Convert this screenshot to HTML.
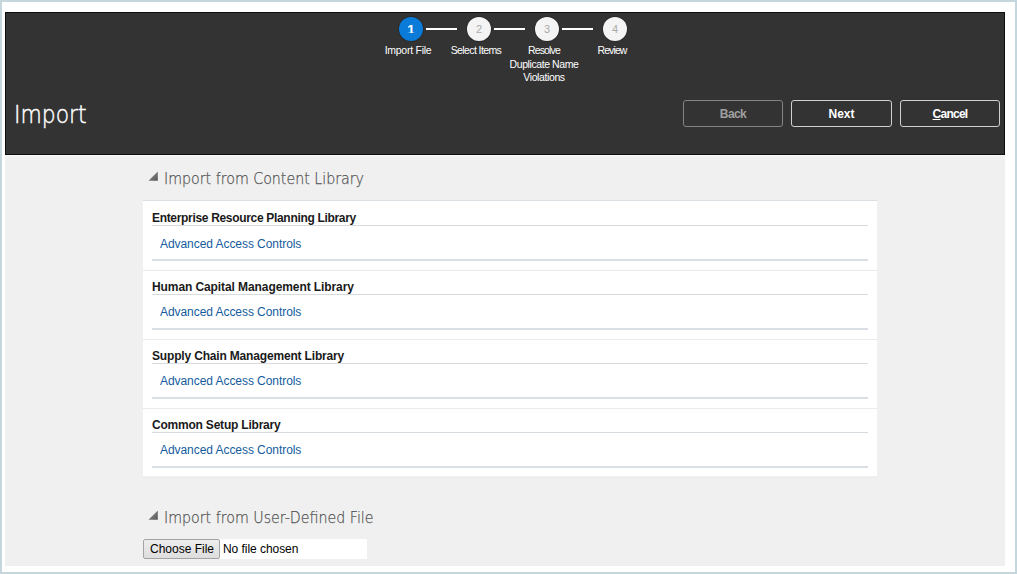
<!DOCTYPE html>
<html lang="en">
<head>
<meta charset="utf-8">
<title>Import</title>
<style>
html,body{margin:0;padding:0;}
body{width:1017px;height:574px;overflow:hidden;background:#fff;position:relative;font-family:"Liberation Sans",sans-serif;}
.frame{position:absolute;left:0;top:0;width:1013px;height:570px;border:2px solid #c6d6dd;}
.hdr{position:absolute;left:5px;top:12px;width:1000px;height:143px;background:#333333;box-sizing:border-box;border:1px solid #0e0e0e;}
.main{position:absolute;left:5px;top:155px;width:1000px;height:411px;background:linear-gradient(#fbfbfb,#f0f0f0 2px,#f0f0f0);}
.abs{position:absolute;white-space:nowrap;}
.circle{position:absolute;width:24px;height:24px;border-radius:50%;background:#f4f4f4;color:#aaa;font-size:11px;line-height:24px;text-align:center;top:17px;box-shadow:0 0 0 1px #2b2b2b;}
.circle.on{background:#0b7bda;color:#fff;}
.one{position:absolute;left:0;top:1px;width:24px;font-weight:bold;font-size:13.5px;line-height:24px;text-align:center;clip-path:inset(0 0 9px 0);}
.conn{position:absolute;height:2px;background:#fff;top:28px;width:31px;}
.lbl{position:absolute;color:#fff;font-size:10.5px;line-height:13.6px;text-align:center;width:100px;top:44.2px;}
.lbl span{display:block;}
.title{position:absolute;left:14px;top:98px;color:#fff;font-family:"DejaVu Sans Light","DejaVu Sans","Liberation Sans",sans-serif;font-size:24.5px;line-height:34px;font-weight:200;transform:scaleX(.893);transform-origin:0 0;-webkit-text-stroke:.45px #fff;white-space:nowrap;}
.btn{position:absolute;top:100px;width:100px;height:27px;box-sizing:border-box;border:1px solid #d0d0d0;border-radius:3px;color:#fff;font-weight:bold;font-size:12px;line-height:27.5px;text-align:center;background:#333;}
.btn.dis{border-color:#848484;color:#a0a0a0;}
.sec{position:absolute;left:164px;color:#555;font-family:"DejaVu Sans Light","DejaVu Sans","Liberation Sans",sans-serif;font-weight:200;font-size:16px;line-height:20px;transform:scaleX(.888);transform-origin:0 0;-webkit-text-stroke:.25px #555;white-space:nowrap;}
.tri{position:absolute;width:14px;height:14px;left:146px;}
.panel{position:absolute;left:143px;top:200px;width:734px;height:276px;background:#fff;border-top:1px solid #d9dfe3;box-sizing:border-box;}
.grp{position:absolute;left:0;width:734px;height:69px;}
.grp .sep{position:absolute;left:0;top:68.5px;width:734px;height:1px;background:#ebebeb;}
.grp h3{position:absolute;left:9px;top:10px;margin:0;font-size:12px;line-height:14px;font-weight:bold;color:#1a1a1a;white-space:nowrap;}
.grp .l1{position:absolute;left:9px;top:24px;width:716px;height:1px;background:#d6dbe0;}
.grp a{position:absolute;left:17px;top:35px;letter-spacing:-0.06px;font-size:12px;line-height:14px;color:#145c9e;text-decoration:none;white-space:nowrap;}
.grp .l2{position:absolute;left:9px;top:58px;width:716px;height:2px;background:#d9dfe4;}
.file{position:absolute;left:143px;top:539px;width:224px;height:19.5px;background:#fff;}
.fbtn{position:absolute;left:0;top:0;width:77px;height:19.5px;box-sizing:border-box;border:1px solid #a3a3a3;border-radius:2px;background:linear-gradient(#ededed,#dedede);color:#000;font-size:12px;line-height:19px;text-align:center;text-indent:1px;}
.ftxt{position:absolute;left:80px;top:0;font-size:12px;line-height:21px;letter-spacing:-0.05px;color:#000;white-space:nowrap;}
</style>
</head>
<body>
<div class="hdr"></div>
<div class="main"></div>
<div class="frame"></div>

<div class="circle on" style="left:399px"><span class="one">1</span></div>
<div class="conn" style="left:426px"></div>
<div class="circle" style="left:467px">2</div>
<div class="conn" style="left:494px"></div>
<div class="circle" style="left:535px">3</div>
<div class="conn" style="left:562px"></div>
<div class="circle" style="left:603px">4</div>
<div class="lbl" style="left:358px;letter-spacing:-0.26px">Import File</div>
<div class="lbl" style="left:426px;letter-spacing:-0.6px">Select Items</div>
<div class="lbl" style="left:494px"><span style="letter-spacing:-0.85px">Resolve</span><span style="letter-spacing:-0.42px">Duplicate Name</span><span style="letter-spacing:-0.39px">Violations</span></div>
<div class="lbl" style="left:562px;letter-spacing:-0.9px">Review</div>

<h1 class="title" style="margin:0">Import</h1>
<div class="btn dis" style="left:683px;letter-spacing:-0.6px">Back</div>
<div class="btn" style="left:791px;width:101px">Next</div>
<div class="btn" style="left:900px;letter-spacing:-0.75px"><u>C</u>ancel</div>

<svg class="tri" style="top:169px" viewBox="0 0 14 14"><defs><linearGradient id="g1" x1="0.2" y1="0.2" x2="1" y2="1"><stop offset="0" stop-color="#8a8a8a"/><stop offset="1" stop-color="#555"/></linearGradient></defs><polygon points="2.5,11.7 11.8,11.7 11.8,2.5" fill="url(#g1)"/></svg>
<div class="sec" style="top:168.7px">Import from Content Library</div>

<div class="panel">
  <div class="grp" style="top:0"><h3 style="letter-spacing:-0.32px">Enterprise Resource Planning Library</h3><div class="l1"></div><a style="top:36px">Advanced Access Controls</a><div class="l2"></div><div class="sep"></div></div>
  <div class="grp" style="top:69px"><h3 style="letter-spacing:-0.09px">Human Capital Management Library</h3><div class="l1"></div><a>Advanced Access Controls</a><div class="l2"></div><div class="sep"></div></div>
  <div class="grp" style="top:138px"><h3 style="letter-spacing:-0.17px">Supply Chain Management Library</h3><div class="l1"></div><a>Advanced Access Controls</a><div class="l2"></div><div class="sep"></div></div>
  <div class="grp" style="top:207px"><h3 style="letter-spacing:-0.21px">Common Setup Library</h3><div class="l1"></div><a>Advanced Access Controls</a><div class="l2"></div><div class="sep"></div></div>
</div>

<svg class="tri" style="top:508px" viewBox="0 0 14 14"><defs><linearGradient id="g2" x1="0.2" y1="0.2" x2="1" y2="1"><stop offset="0" stop-color="#8a8a8a"/><stop offset="1" stop-color="#555"/></linearGradient></defs><polygon points="2.5,11.7 11.8,11.7 11.8,2.5" fill="url(#g2)"/></svg>
<div class="sec" style="top:508.1px">Import from User-Defined File</div>
<div class="file"><div class="fbtn">Choose File</div><div class="ftxt">No file chosen</div></div>
</body>
</html>
